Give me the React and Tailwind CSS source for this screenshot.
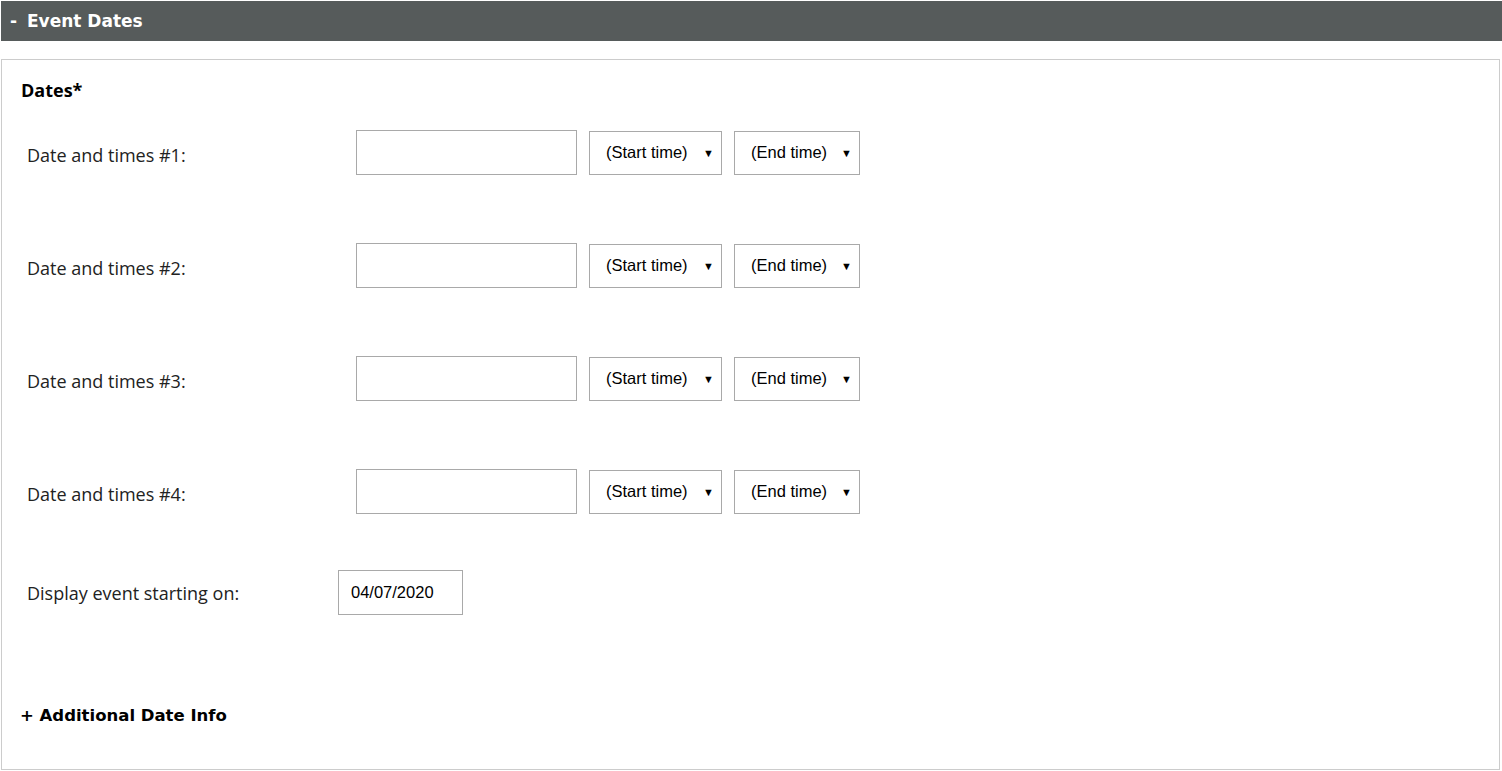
import React from "react";

const sans = { fontFamily: '"Open Sans", "Liberation Sans", sans-serif' };
const heavy = { fontFamily: '"DejaVu Sans", "Open Sans", sans-serif' };
const arial = { fontFamily: '"Liberation Sans", Arial, sans-serif' };

function Select({ label, w }) {
  return (
    <div
      className={`mt-px h-[44px] ${w} border border-[#a9a9a9] bg-white flex items-center pl-[16px] pr-[7px] text-[16.5px] text-black`}
      style={arial}
    >
      <span className="flex-1 -mt-px">{label}</span>
      <span className="text-[11px] leading-none">▼</span>
    </div>
  );
}

function DateRow({ n, first }) {
  return (
    <div className={`flex items-start pl-[6px] ${first ? "" : "mt-[68px]"}`}>
      <div className="w-[329px] h-[45px] pt-[13px] text-[18px] leading-[24px] text-[#222]" style={sans}>
        Date and times #{n}:
      </div>
      <div className="w-[221px] h-[45px] border border-[#a9a9a9] bg-white" />
      <div className="ml-[12px]">
        <Select label="(Start time)" w="w-[133px]" />
      </div>
      <div className="ml-[12px]">
        <Select label="(End time)" w="w-[126px]" />
      </div>
    </div>
  );
}

export default function App() {
  return (
    <div className="w-[1502px] h-[771px] bg-white pt-px overflow-hidden">
      <div
        className="ml-px h-10 bg-[#565b5b] flex items-center pl-[9px] pt-px text-white font-bold text-[17px]"
        style={heavy}
      >
        <span className="w-[18px]">-</span>
        <span className="-ml-px">Event Dates</span>
      </div>
      <div className="mt-[18px] ml-px w-[1499px] h-[711px] border border-[#cccccc] pl-[19px] pt-[18px]">
        <div className="text-[18px] font-bold leading-[24px] text-black" style={sans}>
          Dates*
        </div>
        <div className="mt-[28px]">
          <DateRow n={1} first />
          <DateRow n={2} />
          <DateRow n={3} />
          <DateRow n={4} />
          <div className="flex items-start pl-[6px] mt-[56px]">
            <div className="w-[311px] h-[45px] pt-[11px] text-[18px] leading-[24px] text-[#222]" style={sans}>
              Display event starting on:
            </div>
            <div
              className="w-[125px] h-[45px] border border-[#a9a9a9] bg-white flex items-center pl-[12px] text-[16.5px] text-black"
              style={arial}
            >
              04/07/2020
            </div>
          </div>
        </div>
        <div className="mt-[90px] -ml-[1px] text-[16.5px] font-bold leading-[22px] text-black" style={heavy}>
          + Additional Date Info
        </div>
      </div>
    </div>
  );
}
